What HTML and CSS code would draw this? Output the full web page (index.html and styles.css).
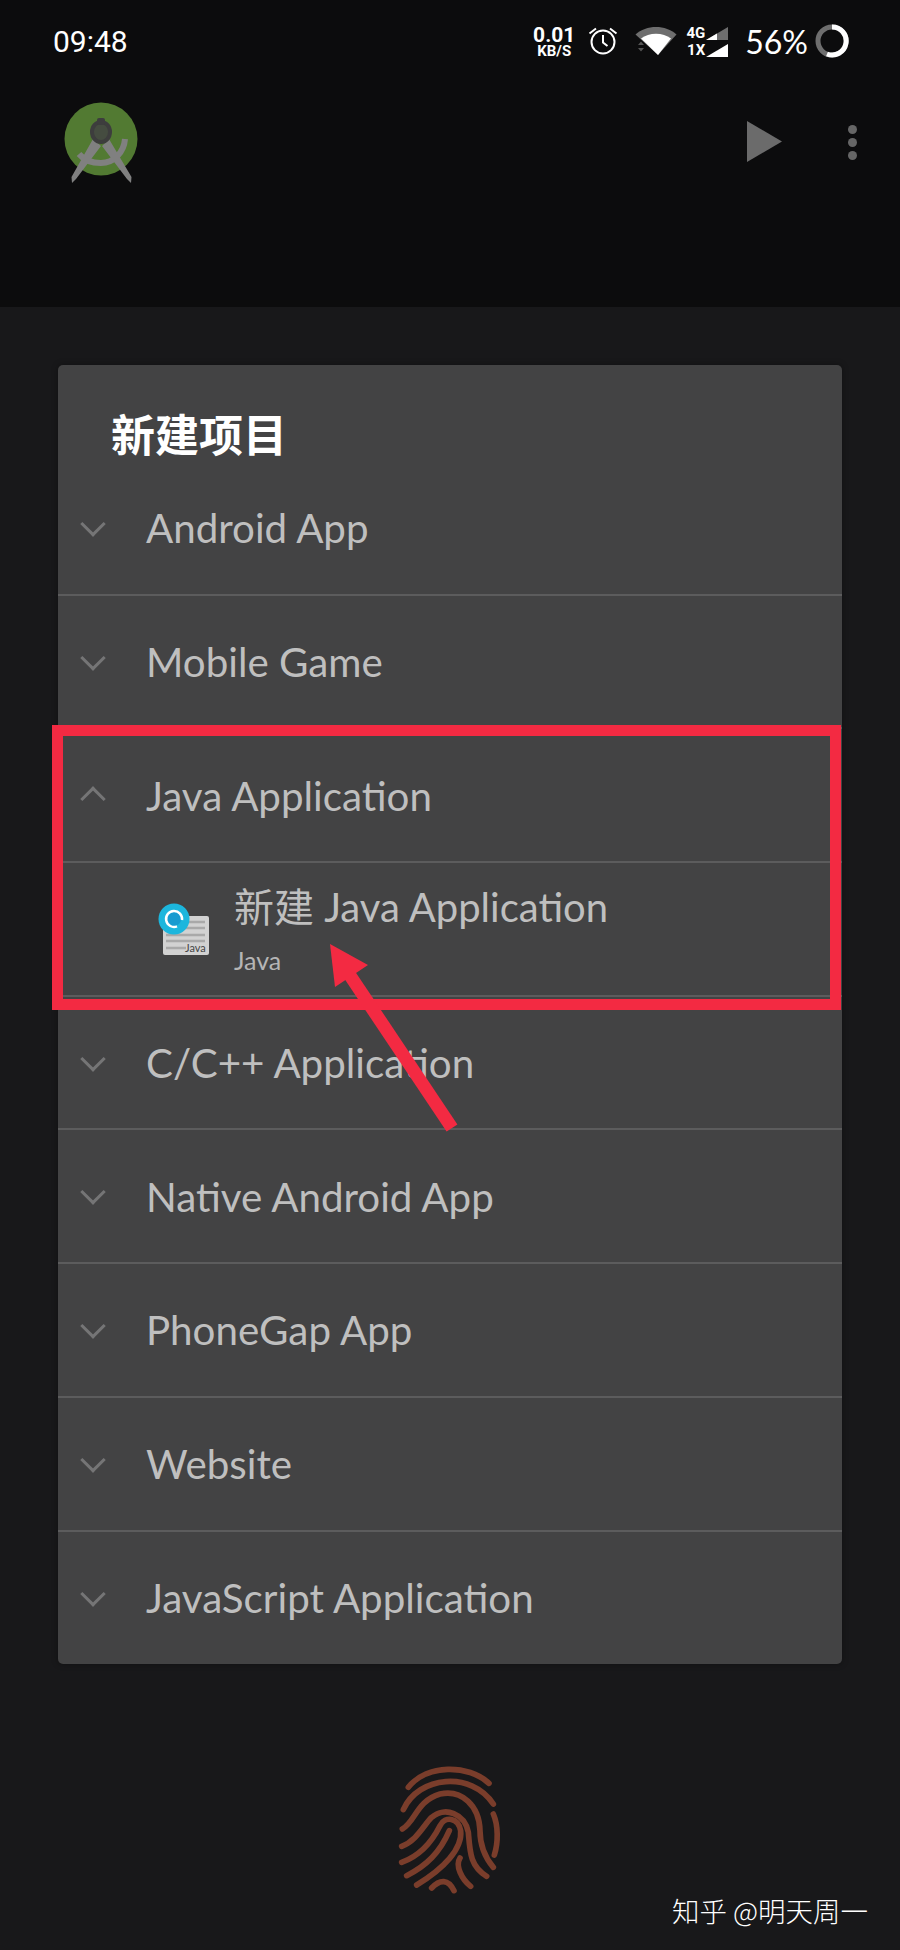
FILE: index.html
```html
<!DOCTYPE html>
<html>
<head>
    <title>新建项目</title>
    <link rel="stylesheet" href="styles.css">
</head>
<body>
    <div class="screen">
        <header class="top">
            <div class="status-bar">
                <span class="clock">09:48</span>
                <div class="status-icons">
                    <div class="net-speed">
                        <span class="net-num">0.01</span>
                        <span class="net-unit">KB/S</span>
                    </div>
                    <svg class="alarm" viewBox="0 0 32 32" width="32" height="32">
                        <circle cx="16" cy="17" r="11.5" fill="none" stroke="#fff" stroke-width="2"/>
                        <path d="M16 10v7.5l4.5 3.5" fill="none" stroke="#fff" stroke-width="2"/>
                        <path d="M2.5 8.5 9 3.5M29.500 8.500 23 3.500" fill="none" stroke="#fff" stroke-width="2"/>
                    </svg>
                    <svg class="wifi" viewBox="0 0 42 30" width="42" height="30">
                        <path d="M0.500 8.500C11 -1.500 31 -1.500 41.500 8.500L23 29Z" fill="#6e6e6e"/>
                        <path d="M6 12.500C14 6 28 6 36 12.500L23 29Z" fill="#fff"/>
                        <path d="M3 19l3-3.500 3 3.500zM3 22l3 3.500 3-3.500z" fill="#555"/>
                    </svg>
                    <div class="sim-list">
                        <div class="sim">
                            <span class="sim-text">4G</span>
                            <svg viewBox="0 0 22 14" width="22" height="14"><path d="M0 13 22 0v13z" fill="#6e6e6e"/><path d="M0 13 11 6.500V13z" fill="#fff"/></svg>
                        </div>
                        <div class="sim">
                            <span class="sim-text">1X</span>
                            <svg viewBox="0 0 22 14" width="22" height="14"><path d="M0 13 22 0v13z" fill="#fff"/></svg>
                        </div>
                    </div>
                    <span class="battery-num">56%</span>
                    <svg class="battery" viewBox="0 0 34 34" width="34" height="34">
                        <circle cx="17" cy="17" r="14" fill="none" stroke="#6e6e6e" stroke-width="5"/>
                        <path d="M17 3A14 14 0 1 1 12 30" fill="none" stroke="#fff" stroke-width="5"/>
                    </svg>
                </div>
            </div>
            <div class="toolbar">
                <svg class="app-logo" viewBox="0 0 76 82" width="76" height="82">
                    <circle cx="37" cy="37" r="36.500" fill="#527a32"/>
                    <path d="M61 37C60 50 50 61 37 61C28 61 20 58 15 52" fill="none" stroke="#808080" stroke-width="6"/>
                    <path d="M29 37 37 44 12 77 8 81 7.500 75zM45 37 38 44 63 77 67 81 67.500 75z" fill="#808080"/>
                    <ellipse cx="37" cy="30" rx="9" ry="10" fill="#454c40" stroke="#3d3d3d" stroke-width="4"/>
                    <rect x="33" y="16" width="8" height="7" rx="2" fill="#3d3d3d"/>
                </svg>
                <div class="toolbar-actions">
                    <svg class="play" viewBox="0 0 36 42" width="36" height="42"><path d="M0 0 35 20.500 0 41z" fill="#6b6b6b"/></svg>
                    <div class="more">
                        <span class="dot"></span>
                        <span class="dot"></span>
                        <span class="dot"></span>
                    </div>
                </div>
            </div>
        </header>

        <main class="content">
            <section class="card">
                <h1 class="card-title">新建项目</h1>
                <div class="row"><span class="chev"></span><span class="row-name">Android App</span></div>
                <div class="row"><span class="chev"></span><span class="row-name">Mobile Game</span></div>
                <div class="row"><span class="chev open"></span><span class="row-name">Java Application</span></div>
                <div class="row child">
                    <svg class="java-icon" viewBox="0 0 52 54" width="52" height="54">
                        <rect x="5" y="13" width="46" height="39" rx="2" fill="#d2d2d2"/>
                        <path d="M20 19h27M20 25h27M8 32h39M8 38h39M8 45h20" stroke="#a9a9a9" stroke-width="2.500"/>
                        <text x="27" y="49" class="java-icon-text">Java</text>
                        <circle cx="16" cy="16" r="15.500" fill="#1cb6dd"/>
                        <circle cx="16" cy="16" r="7" fill="#179bd0"/>
                        <path d="M24 17A8 8 0 1 0 19 23.400" fill="none" stroke="#fff" stroke-width="2.500"/>
                    </svg>
                    <div class="child-text">
                        <div class="child-name">新建 Java Application</div>
                        <div class="child-sub">Java</div>
                    </div>
                </div>
                <div class="row"><span class="chev"></span><span class="row-name">C/C++ Application</span></div>
                <div class="row"><span class="chev"></span><span class="row-name">Native Android App</span></div>
                <div class="row"><span class="chev"></span><span class="row-name">PhoneGap App</span></div>
                <div class="row"><span class="chev"></span><span class="row-name">Website</span></div>
                <div class="row last"><span class="chev"></span><span class="row-name">JavaScript Application</span></div>
            </section>

            <svg class="fingerprint" viewBox="0 0 360 420" width="120" height="140">
                <g fill="none" stroke="#7a3d2b" stroke-width="17" stroke-linecap="round">
                    <path d="M55 85C110 15 235 15 297 73"/>
                    <path d="M40 152C85 50 245 35 310 135"/>
                    <path d="M37 210C75 190 80 125 150 105C215 90 268 140 270 215C270 260 285 295 310 325"/>
                    <path d="M35 262C80 245 100 200 125 175C165 140 225 165 235 220C240 280 240 320 290 352"/>
                    <path d="M35 310C90 290 125 250 150 200C165 170 205 175 212 215C218 270 160 330 80 378"/>
                    <path d="M50 350C110 320 150 280 178 215"/>
                    <path d="M210 297C195 320 215 360 242 382"/>
                    <path d="M125 387C150 360 175 360 192 395"/>
                    <path d="M310 165C325 200 325 250 313 288"/>
                </g>
            </svg>
        </main>

        <!-- red markup drawn on top of the screenshot -->
        <div class="highlight"></div>
        <svg class="arrow" viewBox="0 0 900 1950" width="900" height="1950">
            <path d="M345 968 452 1128" stroke="#f32a42" stroke-width="13"/>
            <path d="M330 944 368 965 335 987z" fill="#f32a42"/>
        </svg>
        <div class="watermark">知乎 @明天周一</div>
    </div>
</body>
</html>
```

FILE: styles.css
```css
body {
    margin: 0;
    background-color: #18181a;
    font-family: Lato, "Noto Sans CJK SC", sans-serif;
}

.screen {
    position: relative;
    width: 900px;
    height: 1950px;
    overflow: hidden;
}

.top {
    height: 307px;
    background-color: #0c0c0d;
}

.status-bar {
    display: flex;
    justify-content: space-between;
    align-items: center;
    height: 82px;
    padding: 0 51px 0 53px;
}

.clock {
    color: #fff;
    font-size: 30px;
    font-family: Roboto, sans-serif;
}

.status-icons {
    display: flex;
    align-items: center;
}

.net-speed {
    display: flex;
    flex-direction: column;
    align-items: center;
    width: 38px;
    color: #fff;
    font-family: Roboto, sans-serif;
    font-weight: 700;
}

.net-num {
    font-size: 21px;
    line-height: 20px;
}

.net-unit {
    font-size: 15px;
    line-height: 13px;
}

.alarm {
    margin-left: 14px;
}

.wifi {
    margin-left: 16px;
}

.sim-list {
    margin-left: 7px;
}

.sim {
    display: flex;
    align-items: flex-end;
    justify-content: flex-end;
    gap: 1px;
    width: 44px;
    height: 17px;
}

.sim-text {
    color: #fff;
    font-size: 15px;
    line-height: 15px;
    font-weight: 700;
    font-family: Roboto, sans-serif;
}

.battery-num {
    margin-left: 17px;
    color: #fff;
    font-size: 32px;
    font-family: Lato, sans-serif;
}

.battery {
    margin-left: 7px;
}

.toolbar {
    display: flex;
    justify-content: space-between;
    align-items: flex-start;
    padding: 20px 43px 0 64px;
}

.toolbar-actions {
    display: flex;
    align-items: center;
    gap: 65px;
    margin-top: 19px;
}

.more {
    display: flex;
    flex-direction: column;
    gap: 4px;
}

.dot {
    width: 9px;
    height: 9px;
    border-radius: 50%;
    background-color: #666;
}

.content {
    display: flex;
    flex-direction: column;
    padding: 58px 58px 0;
}

.card {
    background-color: #434344;
    border-radius: 5px;
    box-shadow: 0 0 6px rgba(0,0,0,0.35);
}

.card-title {
    height: 97px;
    margin: 0;
    padding-left: 53px;
    box-sizing: border-box;
    color: #fff;
    font-size: 44px;
    font-weight: 700;
    line-height: 140px;
}

.row {
    display: flex;
    align-items: center;
    height: 133.7px;
    box-sizing: border-box;
    border-bottom: 2px solid #5c5c5d;
    color: #bfbfbf;
}

.row.last {
    border-bottom: none;
    height: 132px;
}

.chev {
    width: 18px;
    height: 18px;
    margin: -8px 0 0 26px;
    box-sizing: border-box;
    border-right: 3px solid #757576;
    border-bottom: 3px solid #757576;
    transform: rotate(45deg);
}

.chev.open {
    margin-top: 8px;
    transform: rotate(225deg);
}

.row-name {
    margin-left: 44px;
    font-size: 40.3px;
}

.child {
    align-items: flex-start;
}

.java-icon {
    margin: 40px 0 0 100px;
    flex-shrink: 0;
}

.java-icon-text {
    font-size: 11px;
    fill: #444;
    font-family: Lato, sans-serif;
}

.child-text {
    margin-left: 24px;
}

.child-name {
    margin-top: 19px;
    font-size: 40px;
    line-height: 50px;
}

.child-sub {
    margin-top: 13px;
    font-size: 25px;
    line-height: 30px;
    color: #b5b5b5;
}

.fingerprint {
    align-self: center;
    margin-top: 95px;
}

.highlight {
    position: absolute;
    left: 52px;
    top: 725px;
    width: 789px;
    height: 285px;
    box-sizing: border-box;
    border: 11px solid #f32a42;
}

.arrow {
    position: absolute;
    left: 0;
    top: 0;
}

.watermark {
    position: absolute;
    right: 32px;
    top: 1891px;
    color: #fff;
    font-size: 27.5px;
    line-height: 38px;
    font-family: "Noto Sans CJK SC", sans-serif;
    font-weight: 300;
}
```
